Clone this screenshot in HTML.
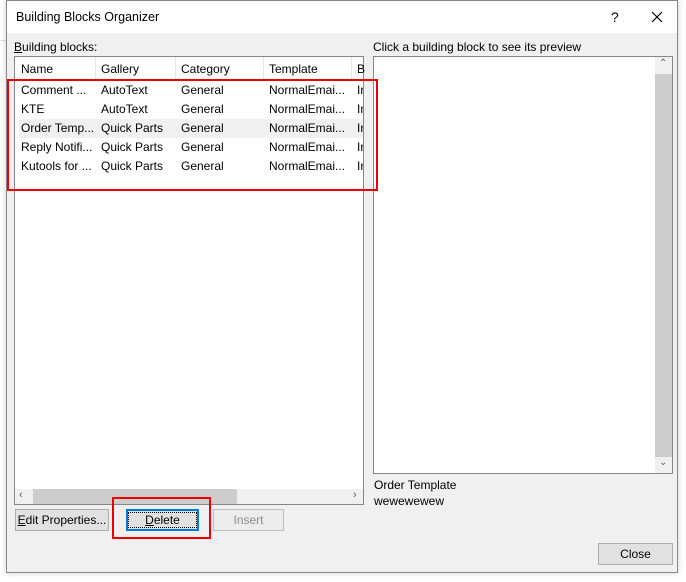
<!DOCTYPE html>
<html><head><style>
*{box-sizing:border-box;margin:0;padding:0}
body{width:686px;height:582px;background:#fff;font-family:"Liberation Sans",sans-serif;font-size:12px;color:#000;position:relative;overflow:hidden}
.a{position:absolute}
.dlg{left:6px;top:0;width:672px;height:573px;background:#f0f0f0;border:1px solid #888;box-shadow:0 0 6px rgba(0,0,0,.2)}
.title{left:0;top:0;width:670px;height:32px;background:#fff}
.t{position:absolute;white-space:nowrap}
.btn{position:absolute;background:#e1e1e1;border:1px solid #adadad;text-align:center;line-height:20px}
.red{position:absolute;border:2px solid #e00}
</style></head><body>
<div class="a" style="left:0;top:40px;width:6px;height:1px;background:#ddd"></div>
<div class="a dlg">
 <div class="a title">
  <div class="t" style="left:9px;top:9px;font-size:12.5px">Building Blocks Organizer</div>
  <div class="t" style="left:604px;top:8px;font-size:14px">?</div>
  <svg class="a" style="left:644px;top:10px" width="12" height="12"><path d="M1 1L11 11M11 1L1 11" stroke="#000" stroke-width="1.2"/></svg>
 </div>
 <div class="t" style="left:7px;top:39px"><u>B</u>uilding blocks:</div>
 <div class="t" style="left:366px;top:39px">Click a building block to see its preview</div>
 <div class="a" style="left:7px;top:55px;width:350px;height:449px;background:#fff;border:1px solid #828790">
  <div class="a" style="left:0;top:0;width:348px;height:23px">
   <div class="t" style="left:6px;top:5px">Name</div>
   <div class="a" style="left:80px;top:0;width:1px;height:23px;background:#e5e5e5"></div>
   <div class="t" style="left:86px;top:5px">Gallery</div>
   <div class="a" style="left:160px;top:0;width:1px;height:23px;background:#e5e5e5"></div>
   <div class="t" style="left:166px;top:5px">Category</div>
   <div class="a" style="left:248px;top:0;width:1px;height:23px;background:#e5e5e5"></div>
   <div class="t" style="left:254px;top:5px">Template</div>
   <div class="a" style="left:336px;top:0;width:1px;height:23px;background:#e5e5e5"></div>
   <div class="t" style="left:342px;top:5px">B</div>
  </div>
  <div class="a" style="left:4px;top:62px;width:344px;height:19px;background:#f0f0f0"></div>
  <div class="a" style="left:0;top:22px;width:348px;height:100px;overflow:hidden">
   <div class="t" style="left:6px;top:2px;line-height:19px">Comment ...<br>KTE<br>Order Temp...<br>Reply Notifi...<br>Kutools for ...</div>
   <div class="t" style="left:86px;top:2px;line-height:19px">AutoText<br>AutoText<br>Quick Parts<br>Quick Parts<br>Quick Parts</div>
   <div class="t" style="left:166px;top:2px;line-height:19px">General<br>General<br>General<br>General<br>General</div>
   <div class="t" style="left:254px;top:2px;line-height:19px">NormalEmai...<br>NormalEmai...<br>NormalEmai...<br>NormalEmai...<br>NormalEmai...</div>
   <div class="t" style="left:342px;top:2px;line-height:19px">In<br>In<br>In<br>In<br>In</div>
  </div>
  <div class="a" style="left:0;top:432px;width:348px;height:15px;background:#f0f0f0">
   <div class="a" style="left:18px;top:0;width:204px;height:15px;background:#cdcdcd"></div>
   <div class="t" style="left:4px;top:0;font-size:11px;color:#606060">‹</div>
   <div class="t" style="left:338px;top:0;font-size:11px;color:#606060">›</div>
  </div>
 </div>
 <div class="a" style="left:366px;top:55px;width:300px;height:418px;background:#fff;border:1px solid #828790">
  <div class="a" style="left:281px;top:0;width:17px;height:416px;background:#f0f0f0">
   <div class="a" style="left:0;top:17px;width:17px;height:383px;background:#cdcdcd"></div>
   <div class="t" style="left:4px;top:1px;font-size:10px;color:#606060">⌃</div>
   <div class="t" style="left:4px;top:400px;font-size:10px;color:#606060">⌄</div>
  </div>
 </div>
 <div class="t" style="left:367px;top:477px">Order Template</div>
 <div class="t" style="left:367px;top:493px">wewewewew</div>
 <div class="btn" style="left:8px;top:508px;width:94px;height:22px"><u>E</u>dit Properties...</div>
 <div class="btn" style="left:119px;top:508px;width:73px;height:22px;border:2px solid #0078d7;line-height:18px"><span style="outline:1px dotted #000;padding:0 16px"><u>D</u>elete</span></div>
 <div class="btn" style="left:206px;top:508px;width:71px;height:22px;background:#ececec;border-color:#bfbfbf;color:#8d8d8d">Insert</div>
 <div class="btn" style="left:591px;top:542px;width:75px;height:22px">Close</div>
</div>
<div class="red" style="left:7px;top:79px;width:371px;height:112px"></div>
<div class="red" style="left:112px;top:497px;width:99px;height:42px"></div>
</body></html>
